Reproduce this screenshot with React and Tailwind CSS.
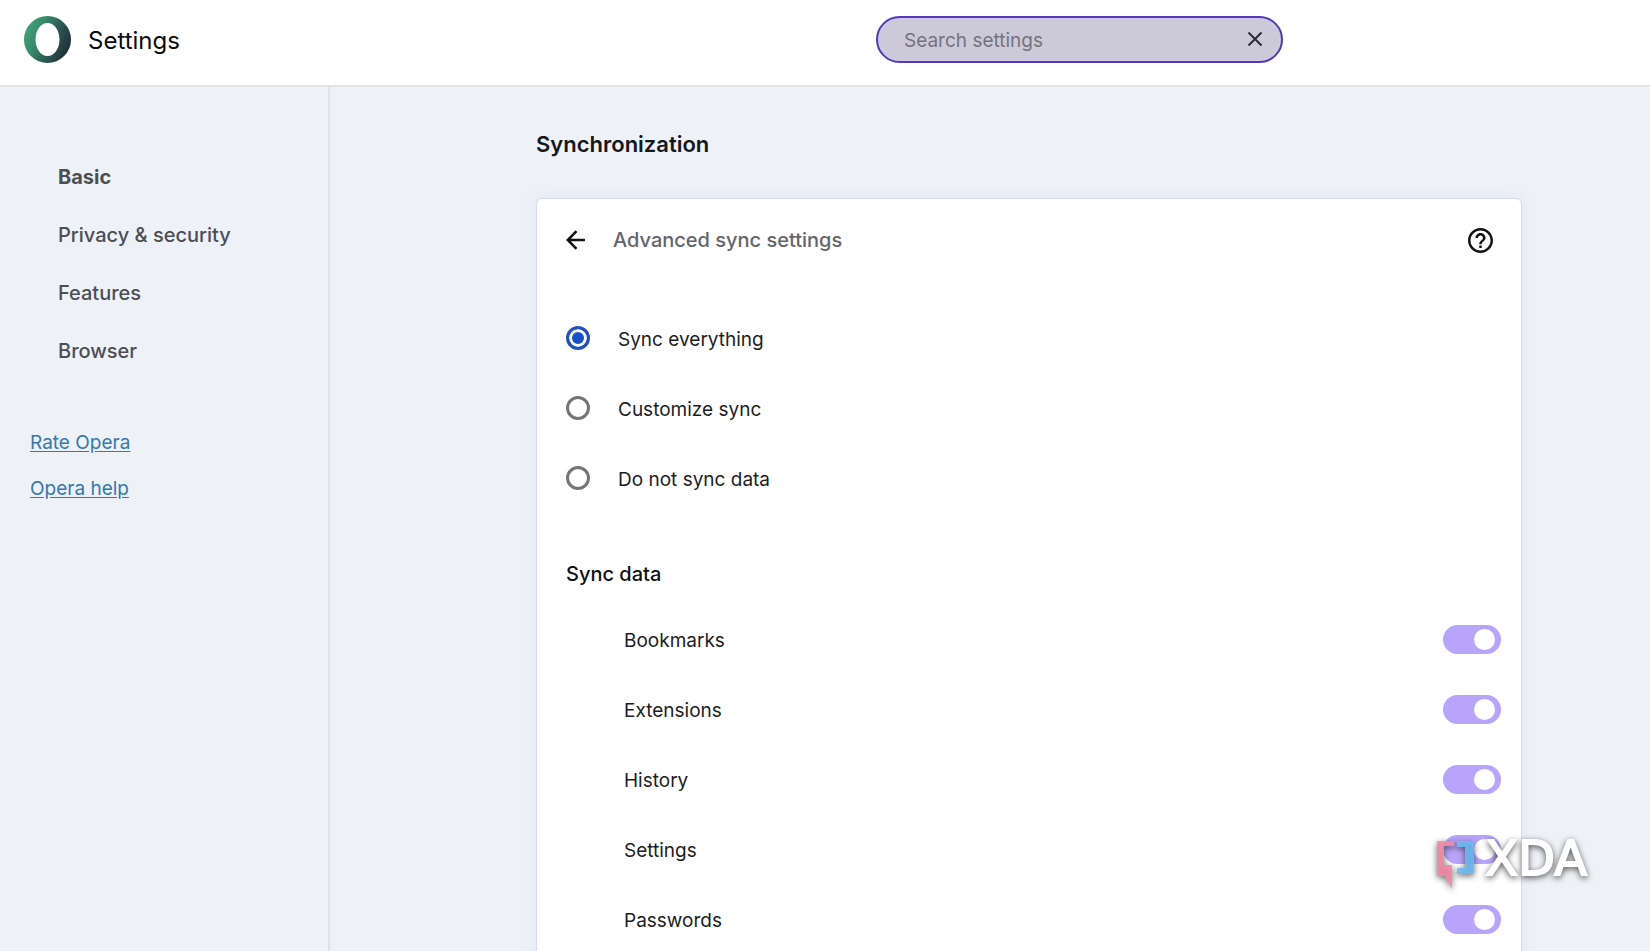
import React, { useState } from 'react';

const NAV = ['Basic', 'Privacy & security', 'Features', 'Browser'];
const SYNC_MODES = ['Sync everything', 'Customize sync', 'Do not sync data'];
const SYNC_TYPES = ['Bookmarks', 'Extensions', 'History', 'Settings', 'Passwords'];

function OperaLogo() {
  return (
    <svg viewBox="0 0 47 47" className="size-[47px] shrink-0" aria-hidden="true">
      <defs>
        <linearGradient id="ring" x1="0" y1="0.25" x2="1" y2="0.7">
          <stop offset="0" stopColor="#43a57c" />
          <stop offset="0.3" stopColor="#378a6b" />
          <stop offset="0.65" stopColor="#2c5654" />
          <stop offset="1" stopColor="#1f2a33" />
        </linearGradient>
      </defs>
      <path
        fill="url(#ring)"
        fillRule="evenodd"
        d="M23.5 0a23.5 23.5 0 1 0 0 47a23.5 23.5 0 1 0 0-47zM23.5 7c6.8 0 12 7.4 12 16.5s-5.200 16.500-12 16.500s-12-7.400-12-16.500s5.200-16.500 12-16.500z"
      />
    </svg>
  );
}

function Watermark() {
  return (
    <div className="pointer-events-none absolute right-[63px] bottom-[62px] flex items-start gap-[11px] drop-shadow-[0_2px_3px_rgba(0,0,0,0.65)]">
      <svg viewBox="0 0 37 48" className="mt-2 h-12 w-[37px]" aria-hidden="true">
        <path d="M0 0h17v5H7v19h8v24L8 35H0z" fill="#f58ba5" fillOpacity="0.88" />
        <path d="M20 0h17v33H20v-6h8V6h-8z" fill="#6bbcf5" fillOpacity="0.88" />
      </svg>
      <span className="font-['DejaVu_Sans',sans-serif] text-5xl leading-[50px] text-white [-webkit-text-stroke:2px_white]">XDA</span>
    </div>
  );
}

export default function App() {
  const [mode, setMode] = useState(SYNC_MODES[0]);
  return (
    <div className="relative flex h-screen flex-col overflow-hidden bg-[#eef2f6] font-['Inter',sans-serif] text-[#1b1d21]">
      <header className="flex h-[87px] shrink-0 items-start border-b-2 border-[#dfe4e9] bg-white pt-4 pl-6">
        <OperaLogo />
        <h1 className="ml-[17px] text-2xl leading-[50px] text-[#0b0b0d]">Settings</h1>
        <form className="relative mr-[367px] ml-auto w-[407px]">
          <input
            type="text"
            aria-label="Search settings"
            placeholder="Search settings"
            className="h-[47px] w-full rounded-full border-2 border-[#5438b8] bg-[#cccad8] pt-0.5 pr-14 pl-[26px] text-[19px] shadow-[inset_0_0_0_1px_#d0c8f0] outline-none placeholder:text-[#75727f]"
          />
          <button type="reset" aria-label="Clear search" className="absolute top-[15px] right-5 flex size-4 items-center justify-center">
            <svg viewBox="0 0 16 16" className="size-4" fill="none" stroke="#2b2938" strokeWidth="2">
              <path d="M1.500 1.500l13 13M14.500 1.500l-13 13" />
            </svg>
          </button>
        </form>
      </header>

      <div className="flex min-h-0 flex-1">
        <aside className="w-[330px] shrink-0 border-r-2 border-[#dde2ee] pt-[61px]">
          <nav className="flex flex-col pl-[58px]">
            {NAV.map((item, i) => (
              <a
                key={item}
                href="#"
                className={'text-xl leading-[58px] text-[#4b4e53] ' + (i === 0 ? 'font-bold' : 'font-medium')}
              >
                {item}
              </a>
            ))}
          </nav>
          <div className="mt-10 flex flex-col items-start pl-[30px] text-[19px] leading-[46px] text-[#3577b0]">
            <a href="#" className="underline underline-offset-2">Rate Opera</a>
            <a href="#" className="underline underline-offset-2">Opera help</a>
          </div>
        </aside>

        <main className="min-w-0 flex-1 overflow-y-auto pt-[41px] pr-32 pl-[206px] [scrollbar-width:none]">
          <h2 className="text-[22px] leading-8 font-semibold text-[#15171b]">Synchronization</h2>
          <section className="mt-[38px] rounded-md border border-[#d6dbe8] bg-white pr-5 pb-10 pl-[29px] shadow-[0_0_12px_rgba(200,210,245,0.35)]">
            <div className="flex h-[82px] items-center">
              <button type="button" aria-label="Back" className="flex size-5 items-center justify-center">
                <svg viewBox="0 0 20 20" className="size-5" fill="none" stroke="#111" strokeWidth="2.500">
                  <path d="M19 10H2.500M10.500 1.200L1.800 10l8.700 8.800" />
                </svg>
              </button>
              <h3 className="ml-[27px] text-xl font-medium text-[#63656a]">Advanced sync settings</h3>
              <button type="button" aria-label="Help" className="mr-2 ml-auto flex size-[26px] items-center justify-center">
                <svg viewBox="2 2 20 20" className="size-[25px]" fill="#111">
                  <path d="M11 18h2v-2h-2v2zm1-16C6.480 2 2 6.480 2 12s4.480 10 10 10 10-4.480 10-10S17.520 2 12 2zm0 18c-4.410 0-8-3.590-8-8s3.590-8 8-8 8 3.590 8 8-3.590 8-8 8zm0-14c-2.210 0-4 1.790-4 4h2c0-1.100.9-2 2-2s2 .9 2 2c0 2-3 1.750-3 5h2c0-2.250 3-2.500 3-5 0-2.210-1.790-4-4-4z" />
                </svg>
              </button>
            </div>

            <fieldset className="mt-[22px]" aria-label="Sync mode">
              {SYNC_MODES.map((label) => (
                <label key={label} className="flex h-[70px] items-center gap-7 text-[19px]">
                  <input
                    type="radio"
                    name="sync-mode"
                    checked={mode === label}
                    onChange={() => setMode(label)}
                    className="size-6 appearance-none rounded-full border-3 border-[#757575] bg-white checked:border-[#2350c0] checked:bg-[#1552c8] checked:shadow-[inset_0_0_0_3px_#fff]"
                  />
                  <span className="pt-1">{label}</span>
                </label>
              ))}
            </fieldset>

            <h3 className="mt-11 text-xl leading-[34px] font-medium text-[#101114]">Sync data</h3>
            <ul className="mt-[13px] pl-[58px]">
              {SYNC_TYPES.map((label) => (
                <li key={label}>
                  <label className="flex h-[70px] items-center justify-between text-[19px]">
                    <span className="pt-1">{label}</span>
                    <input
                      type="checkbox"
                      role="switch"
                      defaultChecked
                      className="flex h-[29px] w-[58px] appearance-none items-center rounded-full bg-[#b8a5fb] px-[6px] before:size-[21px] before:rounded-full before:bg-white checked:justify-end"
                    />
                  </label>
                </li>
              ))}
            </ul>
          </section>
        </main>
      </div>

      <Watermark />
    </div>
  );
}
